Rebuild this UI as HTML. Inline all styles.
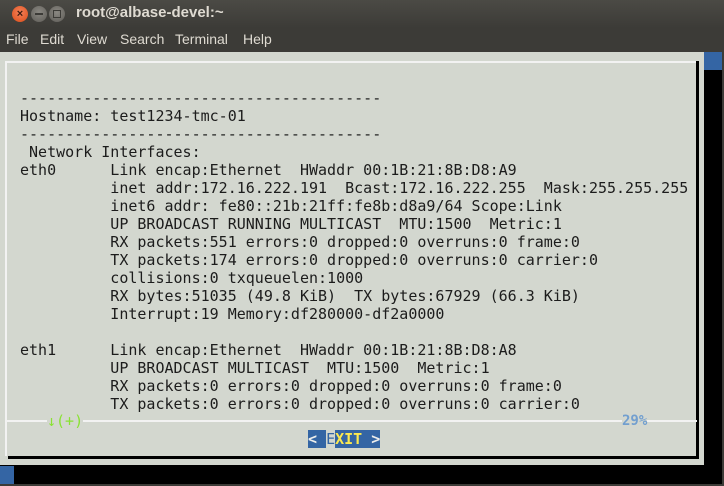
<!DOCTYPE html>
<html><head><meta charset="utf-8"><style>
*{margin:0;padding:0;box-sizing:border-box}
body{width:724px;height:486px;overflow:hidden;background:#3c3b37;position:relative;font-family:"Liberation Sans",sans-serif}
#title{position:absolute;left:0;top:0;width:724px;height:28px;background:linear-gradient(#4b4a45,#3c3b37)}
.btn{position:absolute;top:6px;width:16px;height:16px;border-radius:50%}
#menu{position:absolute;left:0;top:28px;width:724px;height:24px;background:#3c3b37;color:#dfdbd2;font-size:14px}
#menu span{position:absolute;top:3px}
#term{position:absolute;left:0;top:52px;width:722px;height:432px;background:#000}
#dlg{position:absolute;left:0;top:52px;width:704px;height:413px;background:#d3d7cf}
pre{position:absolute;left:20px;top:89px;font-family:"DejaVu Sans Mono",monospace;font-size:15px;line-height:18px;color:#1c1c1c}
</style></head><body>
<div id="title">
 <div class="btn" style="left:12px;background:radial-gradient(circle at 50% 40%,#f6825a,#d94c18);color:#3a1a10;font-size:11px;text-align:center;line-height:16px;font-weight:bold">×</div>
 <div class="btn" style="left:31px;background:radial-gradient(circle at 50% 40%,#8a8882,#5e5c57)"><div style="position:absolute;left:4px;top:7px;width:8px;height:2px;background:#3c3b37"></div></div>
 <div class="btn" style="left:49px;background:radial-gradient(circle at 50% 40%,#8a8882,#5e5c57)"><div style="position:absolute;left:4px;top:4px;width:8px;height:8px;border:1.5px solid #3c3b37"></div></div>
 <div style="position:absolute;left:76px;top:4px;color:#dfdbd2;font-size:15px;font-weight:bold">root@albase-devel:~</div>
</div>
<div id="menu"><span style="left:6px">File</span><span style="left:40px">Edit</span><span style="left:77px">View</span><span style="left:120px">Search</span><span style="left:175px">Terminal</span><span style="left:243px">Help</span></div>
<div id="term"></div>
<div style="position:absolute;left:704px;top:52px;width:18px;height:18px;background:#3465a4"></div>
<div style="position:absolute;left:0;top:466px;width:14px;height:18px;background:#3465a4"></div>
<div style="position:absolute;left:722px;top:52px;width:2px;height:434px;background:#3c3b37"></div>
<div id="dlg"></div>
<div style="position:absolute;left:6px;top:61px;width:690px;height:2px;background:#f2f2f2"></div>
<div style="position:absolute;left:5px;top:61px;width:2px;height:395px;background:#f2f2f2"></div>
<div style="position:absolute;left:696px;top:61px;width:3px;height:397px;background:#000"></div>
<div style="position:absolute;left:8px;top:456px;width:691px;height:3px;background:#000"></div>
<pre>----------------------------------------
Hostname: test1234-tmc-01
----------------------------------------
 Network Interfaces:
eth0      Link encap:Ethernet  HWaddr 00:1B:21:8B:D8:A9
          inet addr:172.16.222.191  Bcast:172.16.222.255  Mask:255.255.255
          inet6 addr: fe80::21b:21ff:fe8b:d8a9/64 Scope:Link
          UP BROADCAST RUNNING MULTICAST  MTU:1500  Metric:1
          RX packets:551 errors:0 dropped:0 overruns:0 frame:0
          TX packets:174 errors:0 dropped:0 overruns:0 carrier:0
          collisions:0 txqueuelen:1000
          RX bytes:51035 (49.8 KiB)  TX bytes:67929 (66.3 KiB)
          Interrupt:19 Memory:df280000-df2a0000

eth1      Link encap:Ethernet  HWaddr 00:1B:21:8B:D8:A8
          UP BROADCAST MULTICAST  MTU:1500  Metric:1
          RX packets:0 errors:0 dropped:0 overruns:0 frame:0
          TX packets:0 errors:0 dropped:0 overruns:0 carrier:0</pre>
<div style="position:absolute;left:7px;top:420px;width:690px;height:2px;background:#f2f2f2"></div>
<div style="position:absolute;left:47px;top:411px;background:#d3d7cf;font-family:'DejaVu Sans Mono',monospace;font-size:15px;color:#8ae234;line-height:20px">↓(+)</div>
<div style="position:absolute;left:622px;top:412px;background:#d3d7cf;font-family:'DejaVu Sans Mono',monospace;font-size:14px;font-weight:bold;color:#729fcf;line-height:18px">29%</div>
<div style="position:absolute;left:308px;top:430px;width:72px;height:18px;background:#3465a4;font-family:'DejaVu Sans Mono',monospace;font-size:15px;font-weight:bold;line-height:18px;white-space:pre;color:#eeeeec">< <span style="background:#d3d7cf;color:#3465a4;font-weight:normal">E</span><span style="color:#fce94f">XIT</span> ></div>
</body></html>
